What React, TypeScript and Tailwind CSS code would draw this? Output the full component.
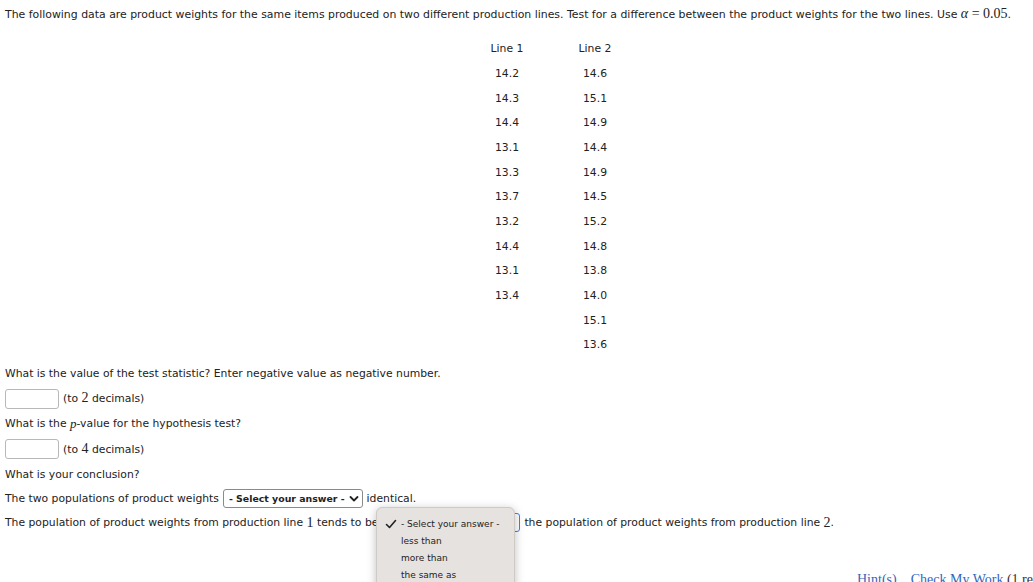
import React from "react";

const line1 = ["14.2", "14.3", "14.4", "13.1", "13.3", "13.7", "13.2", "14.4", "13.1", "13.4", "", ""];
const line2 = ["14.6", "15.1", "14.9", "14.4", "14.9", "14.5", "15.2", "14.8", "13.8", "14.0", "15.1", "13.6"];

function Num({ children }: { children: React.ReactNode }) {
  return <span className="font-['Liberation_Serif',serif] text-[14px]">{children}</span>;
}

function Chevron() {
  return (
    <svg width="10" height="8" viewBox="0 0 10 8" className="ml-[4px]">
      <path d="M1.5 2 L5 5.5 L8.5 2" fill="none" stroke="#222" strokeWidth="1.8" strokeLinecap="round" strokeLinejoin="round" />
    </svg>
  );
}

export default function App() {
  return (
    <div className="relative w-[1033px] h-[582px] overflow-hidden bg-white font-['DejaVu_Sans','Verdana',sans-serif] text-[10.8px] text-[#222] leading-[14px]">
      <div className="pl-[5px] pt-[7px]">
        <p className="h-[14px] whitespace-nowrap text-[10.9px]">
          The following data are product weights for the same items produced on two different production lines. Test for a difference between the product weights for the two lines. Use{" "}
          <span className="font-['Liberation_Serif',serif] text-[14px] italic">α</span>
          <span className="font-['Liberation_Serif',serif] text-[14px]"> = 0.05</span>.
        </p>

        <div className="mt-[16px] ml-[458px] flex">
          <div className="flex w-[88px] flex-col items-center">
            <div className="flex h-[24.67px] items-center">Line 1</div>
            {line1.map((v, i) => (
              <div key={i} className="flex h-[24.67px] items-center">{v}</div>
            ))}
          </div>
          <div className="flex w-[88px] flex-col items-center">
            <div className="flex h-[24.67px] items-center">Line 2</div>
            {line2.map((v, i) => (
              <div key={i} className="flex h-[24.67px] items-center">{v}</div>
            ))}
          </div>
        </div>

        <div className="mt-[4px] flex flex-col">
          <div className="flex h-[24px] items-center">What is the value of the test statistic? Enter negative value as negative number.</div>
          <div className="flex h-[26px] items-center">
            <div className="h-[20px] w-[54px] rounded-[3px] border border-[#b8b8b8] bg-white" />
            <span className="ml-[4px]">(to <Num>2</Num> decimals)</span>
          </div>
          <div className="flex h-[24px] items-center">
            What is the&nbsp;<span className="font-['Liberation_Serif',serif] text-[13px] italic">p</span>-value for the hypothesis test?
          </div>
          <div className="flex h-[27px] items-center">
            <div className="h-[20px] w-[54px] rounded-[3px] border border-[#b8b8b8] bg-white" />
            <span className="ml-[4px]">(to <Num>4</Num> decimals)</span>
          </div>
          <div className="flex h-[24px] items-center">What is your conclusion?</div>
          <div className="flex h-[24px] items-center whitespace-nowrap">
            The two populations of product weights
            <div className="mx-[4px] flex h-[19px] items-center rounded-[3px] border border-[#8a8a8a] bg-white pl-[5px] pr-[3px] text-[9.4px] font-bold">
              - Select your answer -
              <Chevron />
            </div>
            identical.
          </div>
          <div className="relative flex h-[24px] items-center whitespace-nowrap">
            The population of product weights from production line&nbsp;<Num>1</Num>&nbsp;tends to be
            <div className="mx-[4px] h-[19px] w-[138px] rounded-[3px] border-[1.5px] border-[#3b82f6] bg-white" />
            the population of product weights from production line&nbsp;<Num>2</Num>.
            <div className="absolute left-[371px] top-[-4px] w-[139px] h-[90px] rounded-[6px] border border-[#cfcac6] bg-[#e6e2df] pt-[8px] text-[9px] text-[#222] shadow-[0_2px_10px_rgba(0,0,0,0.25)]">
              <div className="flex h-[17px] items-center">
                <svg width="12" height="10" viewBox="0 0 12 10" className="ml-[8px] mr-[4px]">
                  <path d="M1.5 5.5 L4.5 8.5 L10.5 1.5" fill="none" stroke="#222" strokeWidth="1.6" strokeLinecap="round" strokeLinejoin="round" />
                </svg>
                - Select your answer -
              </div>
              <div className="flex h-[17px] items-center pl-[24px]">less than</div>
              <div className="flex h-[17px] items-center pl-[24px]">more than</div>
              <div className="flex h-[17px] items-center pl-[24px]">the same as</div>
            </div>
          </div>
        </div>

        <div className="mt-[38px] ml-[852px] flex gap-[14px] whitespace-nowrap font-['Liberation_Serif',serif] text-[14px] text-[#3366bb]">
          <span>Hint(s)</span>
          <span>
            Check My Work <span className="text-[#333]">(1 remaining)</span>
          </span>
        </div>
      </div>
    </div>
  );
}
